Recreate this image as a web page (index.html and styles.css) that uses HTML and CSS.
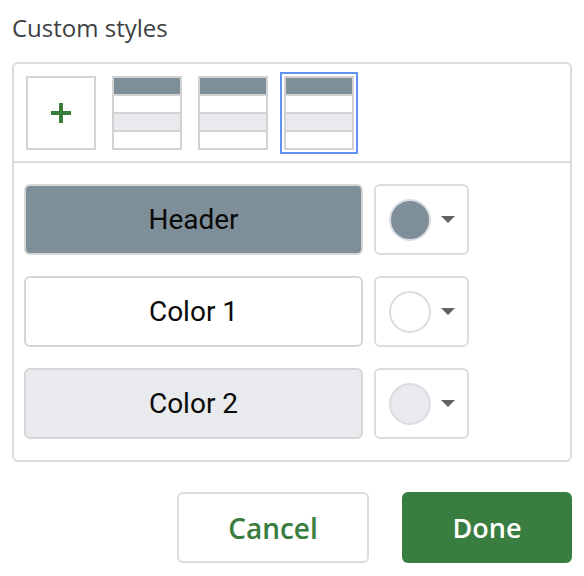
FILE: index.html
```
<!DOCTYPE html>
<html>
<head>
<meta charset="utf-8">
<link rel="stylesheet" href="styles.css">
</head>
<body>
<div class="dialog">
  <div class="title">Custom styles</div>
  <div class="panel">
    <div class="thumbs">
      <div class="add-box">
        <svg width="20" height="20" viewBox="0 0 20 20"><rect x="8" y="0" width="4" height="20" fill="#3a7d3f"/><rect x="0" y="8" width="20" height="4" fill="#3a7d3f"/></svg>
      </div>
      <div class="thumb">
        <div class="t-head"></div><div class="t-row"></div><div class="t-row alt"></div><div class="t-row"></div>
      </div>
      <div class="thumb">
        <div class="t-head"></div><div class="t-row"></div><div class="t-row alt"></div><div class="t-row"></div>
      </div>
      <div class="thumb selected">
        <div class="t-head"></div><div class="t-row"></div><div class="t-row alt"></div><div class="t-row"></div>
      </div>
    </div>
    <div class="rows">
      <div class="row">
        <div class="label header">Header</div>
        <div class="swatch-btn"><span class="circle c-header"></span><span class="caret"></span></div>
      </div>
      <div class="row">
        <div class="label">Color 1</div>
        <div class="swatch-btn"><span class="circle c-white"></span><span class="caret"></span></div>
      </div>
      <div class="row">
        <div class="label alt">Color 2</div>
        <div class="swatch-btn"><span class="circle c-alt"></span><span class="caret"></span></div>
      </div>
    </div>
  </div>
  <div class="actions">
    <div class="btn cancel">Cancel</div>
    <div class="btn done">Done</div>
  </div>
</div>
</body>
</html>
```
FILE: styles.css
```
html, body {
  margin: 0;
  padding: 0;
  background: #fff;
}
body {
  font-family: Roboto, "Liberation Sans", sans-serif;
}
.dialog {
  padding: 0 12px;
}
.title {
  font-family: "Open Sans", sans-serif;
  font-size: 24px;
  color: #3c4043;
  height: 62px;
  line-height: 32px;
  padding-top: 12px;
  box-sizing: border-box;
}
.panel {
  border: 2px solid #dadce0;
  border-radius: 6px;
}
.thumbs {
  display: flex;
  gap: 16px;
  padding: 12px 12px 11px 12px;
  border-bottom: 2px solid #dadce0;
}
.add-box {
  width: 70px;
  height: 74px;
  box-sizing: border-box;
  border: 2px solid #d4d4d4;
  display: flex;
  align-items: center;
  justify-content: center;
}
.thumb {
  width: 70px;
  height: 74px;
  box-sizing: border-box;
  border: 2px solid #d2d2d2;
  background: #d2d2d2;
  display: flex;
  flex-direction: column;
  gap: 2px;
}
.thumb.selected {
  outline: 2px solid #5f95f0;
  outline-offset: 2px;
}
.t-head {
  height: 16px;
  background: #7f8f99;
}
.t-row {
  height: 16px;
  background: #fff;
}
.t-row.alt {
  background: #e8eaed;
}
.rows {
  display: flex;
  flex-direction: column;
  gap: 21px;
  padding: 21px 10px 21px 10px;
}
.row {
  display: flex;
  gap: 11px;
}
.label {
  width: 339px;
  height: 71px;
  box-sizing: border-box;
  border: 2px solid #d6d6d6;
  border-radius: 6px;
  background: #fff;
  display: flex;
  align-items: center;
  justify-content: center;
  font-size: 28px;
  color: #0a0a0a;
}
.label.header {
  background: #7f8f99;
}
.label.alt {
  background: #e8eaed;
}
.swatch-btn {
  width: 95px;
  height: 71px;
  box-sizing: border-box;
  border: 2px solid #dadce0;
  border-radius: 6px;
  display: flex;
  align-items: center;
  padding-left: 13px;
  gap: 10px;
}
.circle {
  width: 42px;
  height: 42px;
  box-sizing: border-box;
  border-radius: 50%;
  border: 2px solid #dadce0;
}
.c-header { background: #7f8f99; }
.c-white { background: #fff; }
.c-alt { background: #e8eaed; }
.caret {
  width: 0;
  height: 0;
  border-left: 7px solid transparent;
  border-right: 7px solid transparent;
  border-top: 7px solid #5f6368;
}
.actions {
  display: flex;
  justify-content: flex-end;
  gap: 33px;
  margin-top: 30px;
}
.btn {
  height: 71px;
  box-sizing: border-box;
  border-radius: 6px;
  display: flex;
  align-items: center;
  justify-content: center;
  font-family: "Open Sans", sans-serif;
  font-weight: 600;
  font-size: 27px;
}
.cancel {
  width: 192px;
  border: 2px solid #dadce0;
  color: #3a7d3f;
  background: #fff;
  font-size: 28px;
}
.done {
  width: 170px;
  background: #3a7d41;
  color: #fff;
}
```
